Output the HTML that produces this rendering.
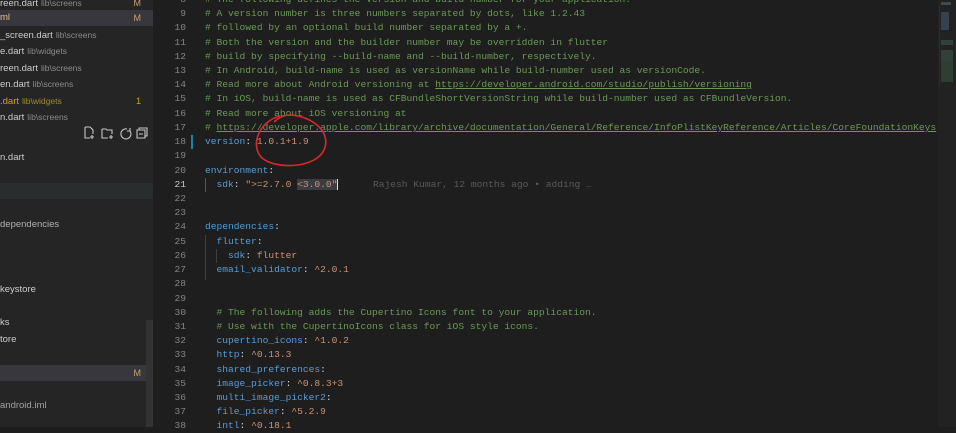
<!DOCTYPE html><html><head><style>
body{margin:0;width:956px;height:427px;overflow:hidden;background:#1e1e1e;position:relative;font-family:"Liberation Sans",sans-serif}
.sb{position:absolute;left:0;top:0;width:153px;height:427px;background:#252526}
.r{position:absolute;left:0;width:153px;height:16px;line-height:16px;font-size:9.5px;color:#cccccc;white-space:nowrap}
.r .p{color:#8b8b8b;font-size:8.5px;margin-left:3px}
.r .m{position:absolute;right:12px;color:#c9a26d;font-size:9px}
.sel{background:#37373d}
.ed{position:absolute;left:153px;top:0;right:0;height:427px;font-family:"Liberation Mono",monospace;font-size:9.6px}
.l{position:absolute;left:0;height:14px;line-height:14px;white-space:pre;color:#d4d4d4}
.n{position:absolute;width:33px;text-align:right;color:#858585}
.t{position:absolute;left:52px}
.c{color:#6a9955}.k{color:#569cd6}.s{color:#ce9178}.u{color:#6a9955;text-decoration:underline}
.g{color:#5a5a5a}
</style></head><body>
<div class="sb">
<div class="r" style="top:-5px">reen.dart<span class="p">lib\screens</span><span class="m">M</span></div>
<div class="r sel" style="top:10px;color:#e2c08d">ml<span class="m">M</span></div>
<div class="r" style="top:27px">_screen.dart<span class="p">lib\screens</span></div>
<div class="r" style="top:43px">e.dart<span class="p">lib\widgets</span></div>
<div class="r" style="top:60px">reen.dart<span class="p">lib\screens</span></div>
<div class="r" style="top:76px">en.dart<span class="p">lib\screens</span></div>
<div class="r" style="top:93px;color:#cca700">.dart<span class="p" style="color:#a08a30">lib\widgets</span><span class="m" style="color:#cca700">1</span></div>
<div class="r" style="top:109px">n.dart<span class="p">lib\screens</span></div>
<svg style="position:absolute;left:83px;top:126px" width="66" height="14" fill="none" stroke="#c5c5c5" stroke-width="1.1">
<path d="M2 1h5l3 3v4M2 1v11h5M9 9v4M7 11h4"/>
<path d="M19 3h4l1 1h5v4M19 3v9h6M28 9v4M26 11h4"/>
<path d="M44 3a5 5 0 1 0 3 2M47 2v3h-3"/>
<path d="M54 4h8v8h-8zM56 4V2h8v8h-2M56 8h4"/>
</svg>
<div class="r" style="top:150px">n.dart</div>
<div class="r sel" style="top:183px;background:#2a2d2e"></div>
<div class="r" style="top:217px;color:#b0b0b0">dependencies</div>
<div class="r" style="top:282px">keystore</div>
<div class="r" style="top:315px">ks</div>
<div class="r" style="top:332px">tore</div>
<div class="r sel" style="top:365px;background:#37373d"><span class="m">M</span></div>
<div class="r" style="top:398px;color:#a0a0a0">android.iml</div>
<div style="position:absolute;left:146px;top:320px;width:7px;height:107px;background:#333"></div>
</div>
<div class="ed">
<div style="position:absolute;left:38px;top:135px;width:2px;height:14px;background:#1b81a8"></div>
<div style="position:absolute;left:52px;top:178px;width:1px;height:14px;background:#555"></div>
<div style="position:absolute;left:52px;top:235px;width:1px;height:45px;background:#404040"></div>
<div style="position:absolute;left:63px;top:249px;width:1px;height:14px;background:#404040"></div>
<div style="position:absolute;left:785px;top:0;width:18px;height:427px;background:#222"></div>
<div style="position:absolute;left:786px;top:5px;width:1px;height:80px;background:#2c2c2c"></div>
<div style="position:absolute;left:788px;top:2px;width:10px;height:3px;background:#3d4a52"></div>
<div style="position:absolute;left:788px;top:12px;width:8px;height:18px;background:#34424d"></div>
<div style="position:absolute;left:788px;top:40px;width:12px;height:5px;background:#33403a"></div>
<div style="position:absolute;left:788px;top:50px;width:12px;height:12px;background:#33403a"></div>
<div style="position:absolute;left:788px;top:62px;width:12px;height:20px;background:#2f3d33"></div>
<div class="l" style="top:-7px"><span class="n">8</span><span class="t c"># The following defines the version and build number for your application.</span></div>
<div class="l" style="top:7px"><span class="n">9</span><span class="t c"># A version number is three numbers separated by dots, like 1.2.43</span></div>
<div class="l" style="top:21px"><span class="n">10</span><span class="t c"># followed by an optional build number separated by a +.</span></div>
<div class="l" style="top:36px"><span class="n">11</span><span class="t c"># Both the version and the builder number may be overridden in flutter</span></div>
<div class="l" style="top:50px"><span class="n">12</span><span class="t c"># build by specifying --build-name and --build-number, respectively.</span></div>
<div class="l" style="top:64px"><span class="n">13</span><span class="t c"># In Android, build-name is used as versionName while build-number used as versionCode.</span></div>
<div class="l" style="top:78px"><span class="n">14</span><span class="t c"># Read more about Android versioning at <span class="u">https://developer.android.com/studio/publish/versioning</span></span></div>
<div class="l" style="top:92px"><span class="n">15</span><span class="t c"># In iOS, build-name is used as CFBundleShortVersionString while build-number used as CFBundleVersion.</span></div>
<div class="l" style="top:107px"><span class="n">16</span><span class="t c"># Read more about iOS versioning at</span></div>
<div class="l" style="top:121px"><span class="n">17</span><span class="t c"># <span class="u">https://developer.apple.com/library/archive/documentation/General/Reference/InfoPlistKeyReference/Articles/CoreFoundationKeys</span></span></div>
<div class="l" style="top:135px"><span class="n">18</span><span class="t"><span class="k">version</span>: <span class="s">1.0.1+1.9</span></span></div>
<div class="l" style="top:149px"><span class="n">19</span></div>
<div class="l" style="top:164px"><span class="n">20</span><span class="t"><span class="k">environment</span>:</span></div>
<div class="l" style="top:178px"><span class="n" style="color:#c6c6c6">21</span><span class="t">  <span class="k">sdk</span>: <span class="s">"&gt;=2.7.0 <span style="background:#3a3d41">&lt;3.0.0"</span></span><span style="border-left:1px solid #ddd"></span>      <span class="g">Rajesh Kumar, 12 months ago • adding …</span></span></div>
<div class="l" style="top:192px"><span class="n">22</span></div>
<div class="l" style="top:206px"><span class="n">23</span></div>
<div class="l" style="top:220px"><span class="n">24</span><span class="t"><span class="k">dependencies</span>:</span></div>
<div class="l" style="top:235px"><span class="n">25</span><span class="t">  <span class="k">flutter</span>:</span></div>
<div class="l" style="top:249px"><span class="n">26</span><span class="t">    <span class="k">sdk</span>: <span class="s">flutter</span></span></div>
<div class="l" style="top:263px"><span class="n">27</span><span class="t">  <span class="k">email_validator</span>: <span class="s">^2.0.1</span></span></div>
<div class="l" style="top:277px"><span class="n">28</span></div>
<div class="l" style="top:292px"><span class="n">29</span></div>
<div class="l" style="top:306px"><span class="n">30</span><span class="t c">  # The following adds the Cupertino Icons font to your application.</span></div>
<div class="l" style="top:320px"><span class="n">31</span><span class="t c">  # Use with the CupertinoIcons class for iOS style icons.</span></div>
<div class="l" style="top:334px"><span class="n">32</span><span class="t">  <span class="k">cupertino_icons</span>: <span class="s">^1.0.2</span></span></div>
<div class="l" style="top:348px"><span class="n">33</span><span class="t">  <span class="k">http</span>: <span class="s">^0.13.3</span></span></div>
<div class="l" style="top:363px"><span class="n">34</span><span class="t">  <span class="k">shared_preferences</span>:</span></div>
<div class="l" style="top:377px"><span class="n">35</span><span class="t">  <span class="k">image_picker</span>: <span class="s">^0.8.3+3</span></span></div>
<div class="l" style="top:391px"><span class="n">36</span><span class="t">  <span class="k">multi_image_picker2</span>:</span></div>
<div class="l" style="top:405px"><span class="n">37</span><span class="t">  <span class="k">file_picker</span>: <span class="s">^5.2.9</span></span></div>
<div class="l" style="top:419px"><span class="n">38</span><span class="t">  <span class="k">intl</span>: <span class="s">^0.18.1</span></span></div>
<svg style="position:absolute;left:95px;top:110px" width="90" height="64"><path d="M32 6 C10 12,2 36,14 48 C28 60,68 58,76 40 C84 22,64 6,42 5 C36 5,30 8,26 12" fill="none" stroke="#d42a2a" stroke-width="1.6"/></svg>
</div>
</body></html>
